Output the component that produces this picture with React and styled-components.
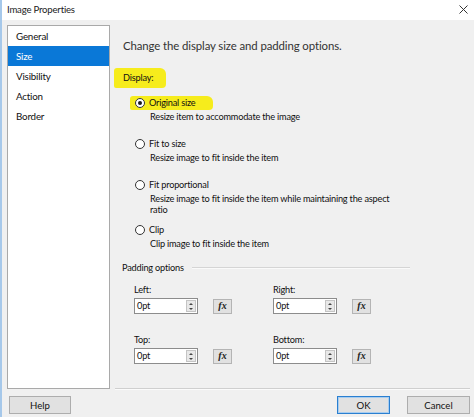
import React from "react";
import styled, { createGlobalStyle } from "styled-components";

const Global = createGlobalStyle`
  html, body { margin: 0; padding: 0; background: #ffffff; }
  body { font-family: "Segoe UI", Lato, "Noto Sans", sans-serif; }
  * { box-sizing: border-box; }
`;

const Window = styled.div`
  width: 474px;
  height: 417px;
  display: flex;
  flex-direction: column;
  border-left: 2px solid #a6c8ea;
  overflow: hidden;
  color: #111;
  font-size: 9.2px;
  letter-spacing: -0.2px;
`;

const TitleBar = styled.div`
  height: 20px;
  flex: none;
  display: flex;
  align-items: center;
  justify-content: space-between;
  padding: 0 6px 2px 5px;
  background: #ffffff;
  font-size: 9.6px;
  color: #222;
`;

const Body = styled.div`
  flex: 1;
  background: #f0f0f0;
  display: grid;
  grid-template-columns: 103px 1fr;
  grid-template-rows: 364px 18px;
  row-gap: 7px;
  padding: 5px 4px 0 5px;
`;

const NavList = styled.ul`
  margin: 0;
  padding: 0;
  list-style: none;
  background: #ffffff;
  border: 1px solid #a9a9a9;
  font-size: 9.8px;
`;

const NavItem = styled.li`
  height: 20px;
  line-height: 20px;
  padding-left: 8px;
  background: ${(p) => (p.$active ? "#0a78d7" : "transparent")};
  color: ${(p) => (p.$active ? "#ffffff" : "#111")};
`;

const Main = styled.section`
  margin-left: 5px;
  border-bottom: 1px solid #cfcfcf;
  box-shadow: 0 1px 0 #fbfbfb;
  padding: 13px 0 0 8px;
  display: flex;
  flex-direction: column;
`;

const Heading = styled.h1`
  margin: 0;
  font-weight: 400;
  font-size: 11.4px;
  letter-spacing: -0.1px;
  line-height: 16px;
  color: #333;
`;

const Marker = styled.span`
  display: inline-flex;
  align-items: center;
  background: #f6ec1c;
  border-radius: 3px 6px 4px 2px;
  padding: ${(p) => p.$pad};
  margin: ${(p) => p.$margin};
`;

const SectionLabel = styled.div`
  margin-top: 18px;
  line-height: 12px;
`;

const Options = styled.div`
  display: flex;
  flex-direction: column;
  margin-top: 11px;
  padding-left: 12px;
`;

const Option = styled.div`
  display: flex;
  flex-direction: column;
`;

const OptionTitle = styled.label`
  display: flex;
  align-items: center;
  height: 15px;
  gap: 4px;
`;

const Radio = styled.span`
  width: 10px;
  height: 10px;
  border-radius: 50%;
  border: 1px solid #333;
  background: #fff;
  display: inline-flex;
  align-items: center;
  justify-content: center;
  flex: none;
  &::after {
    content: "";
    width: 4px;
    height: 4px;
    border-radius: 50%;
    background: ${(p) => (p.$checked ? "#1a1a1a" : "transparent")};
  }
`;

const OptionDesc = styled.div`
  padding: 1px 0 7px 15px;
  line-height: 11px;
  min-height: 26px;
  width: 265px;
`;

const GroupHeader = styled.div`
  display: flex;
  align-items: center;
  gap: 8px;
  margin-top: -1px;
  margin-left: -1px;
  width: 288px;
  line-height: 12px;
  &::after {
    content: "";
    flex: 1;
    height: 1px;
    background: #d5d5d5;
    border-bottom: 1px solid #fafafa;
  }
`;

const PadGrid = styled.div`
  display: grid;
  grid-template-columns: 139px 139px;
  row-gap: 20px;
  margin-top: 10px;
  padding-left: 11px;
`;

const Field = styled.div`
  display: flex;
  flex-direction: column;
  gap: 2px;
`;

const FieldLabel = styled.span`
  line-height: 12px;
`;

const InputRow = styled.div`
  display: flex;
  align-items: center;
`;

const TextBox = styled.div`
  width: 52px;
  height: 16px;
  background: #fff;
  border: 1px solid #8c8c8c;
  border-right: none;
  padding-left: 2px;
  line-height: 14px;
`;

const Spinner = styled.div`
  width: 12px;
  height: 16px;
  background: #fff;
  border: 1px solid #8c8c8c;
  border-left: none;
  padding: 1px 1px 1px 0;
  display: flex;
`;

const SpinFace = styled.div`
  flex: 1;
  background: #e8e8e8;
  border: 1px solid #c4c4c4;
  display: flex;
  flex-direction: column;
  align-items: center;
  justify-content: space-around;
`;

const Arrow = styled.span`
  width: 0;
  height: 0;
  border-left: 2px solid transparent;
  border-right: 2px solid transparent;
  ${(p) =>
    p.$up
      ? "border-bottom: 2px solid #444;"
      : "border-top: 2px solid #444;"}
`;

const FxButton = styled.button`
  margin-left: 15px;
  width: 19px;
  height: 15px;
  padding: 0;
  background: #e1e1e1;
  border: 1px solid #b4b4b4;
  font-family: "Liberation Serif", "DejaVu Serif", serif;
  font-style: italic;
  font-weight: 700;
  font-size: 10px;
  line-height: 12px;
  color: #222;
`;

const Footer = styled.div`
  display: flex;
  justify-content: flex-end;
  gap: 17px;
`;

const Button = styled.button`
  width: ${(p) => p.$w}px;
  height: 18px;
  padding: 0;
  font-family: inherit;
  font-size: 9.6px;
  color: #111;
  background: #e1e1e1;
  border: 1px solid ${(p) => (p.$primary ? "#2a7fd0" : "#adadad")};
  box-shadow: ${(p) => (p.$primary ? "inset 0 0 0 1px #a8cdf0" : "none")};
`;

const options = [
  { title: "Original size", desc: "Resize item to accommodate the image", checked: true },
  { title: "Fit to size", desc: "Resize image to fit inside the item" },
  {
    title: "Fit proportional",
    desc: "Resize image to fit inside the item while maintaining the aspect ratio",
  },
  { title: "Clip", desc: "Clip image to fit inside the item" },
];

const paddings = ["Left:", "Right:", "Top:", "Bottom:"];

function CloseIcon() {
  return (
    <svg width="9" height="9" viewBox="0 0 9 9">
      <path d="M0.5 0.5 L8.5 8.5 M8.5 0.5 L0.5 8.5" stroke="#333" strokeWidth="1" />
    </svg>
  );
}

function NumberField({ label }) {
  return (
    <Field>
      <FieldLabel>{label}</FieldLabel>
      <InputRow>
        <TextBox>0pt</TextBox>
        <Spinner>
          <SpinFace>
            <Arrow $up />
            <Arrow />
          </SpinFace>
        </Spinner>
        <FxButton>fx</FxButton>
      </InputRow>
    </Field>
  );
}

export default function App() {
  const nav = ["General", "Size", "Visibility", "Action", "Border"];
  return (
    <>
      <Global />
      <Window>
        <TitleBar>
          <span>Image Properties</span>
          <CloseIcon />
        </TitleBar>
        <Body>
          <NavList>
            {nav.map((n) => (
              <NavItem key={n} $active={n === "Size"}>
                {n}
              </NavItem>
            ))}
          </NavList>
          <Main>
            <Heading>Change the display size and padding options.</Heading>
            <SectionLabel>
              <Marker $pad="4px 13px 4px 9px" $margin="-4px 0 -4px -9px">
                Display:
              </Marker>
            </SectionLabel>
            <Options>
              {options.map((o) => (
                <Option key={o.title}>
                  <OptionTitle>
                    {o.checked ? (
                      <Marker $pad="0 17px 0 5px" $margin="0 0 0 -5px" style={{ gap: 4, height: 14 }}>
                        <Radio $checked />
                        {o.title}
                      </Marker>
                    ) : (
                      <>
                        <Radio />
                        {o.title}
                      </>
                    )}
                  </OptionTitle>
                  <OptionDesc>{o.desc}</OptionDesc>
                </Option>
              ))}
            </Options>
            <GroupHeader>Padding options</GroupHeader>
            <PadGrid>
              {paddings.map((p) => (
                <NumberField key={p} label={p} />
              ))}
            </PadGrid>
          </Main>
          <Button $w={62} style={{ marginLeft: 2 }}>Help</Button>
          <Footer>
            <Button $w={53} $primary>
              OK
            </Button>
            <Button $w={63}>Cancel</Button>
          </Footer>
        </Body>
      </Window>
    </>
  );
}
